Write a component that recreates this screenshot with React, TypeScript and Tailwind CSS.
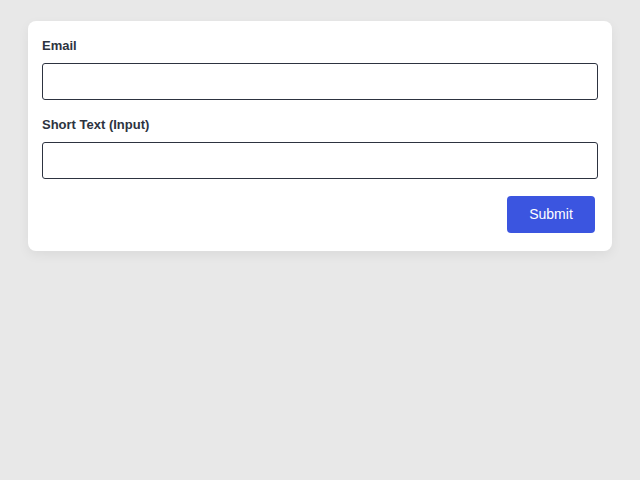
import React from "react";

export default function App() {
  return (
    <div className="min-h-[480px] w-full bg-[#e8e8e8] pt-[21px] px-[28px]" style={{ fontFamily: '"Liberation Sans", Arial, sans-serif' }}>
      <div className="bg-white rounded-[8px] shadow-[0_4px_12px_rgba(0,0,0,0.06)] px-[14px] pt-[14px] pb-[18px]">
        <div className="flex flex-col">
          <label className="block h-[20px] pt-[1px] leading-[20px] text-[13px] font-bold text-[#2d3340] mb-[8px]">Email</label>
          <input type="email" className="block w-full h-[37px] border border-[#2d3340] rounded-[3px] bg-white px-2 text-[14px] outline-none" />
          <label className="block h-[20px] pt-[1px] leading-[20px] text-[13px] font-bold text-[#2d3340] mt-[14px] mb-[8px]">Short Text (Input)</label>
          <input type="text" className="block w-full h-[37px] border border-[#2d3340] rounded-[3px] bg-white px-2 text-[14px] outline-none" />
          <div className="flex justify-end mt-[17px] pr-[3px]">
            <button className="w-[88px] h-[37px] rounded-[4px] bg-[#3b55e0] text-white text-[14px]">Submit</button>
          </div>
        </div>
      </div>
    </div>
  );
}
